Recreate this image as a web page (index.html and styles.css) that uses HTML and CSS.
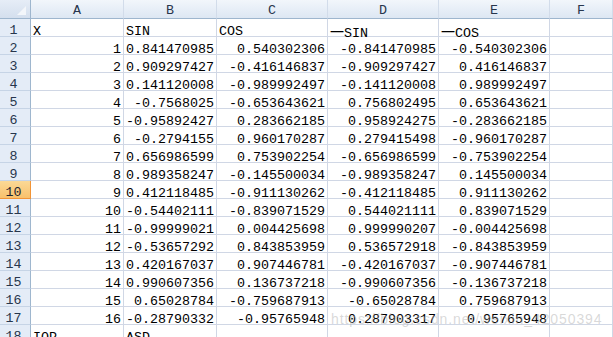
FILE: index.html
```html
<!DOCTYPE html>
<html>
<head>
<meta charset="utf-8">
<link rel="stylesheet" href="styles.css">
</head>
<body>
<div class="sheet">
  <div class="corner"></div>
  <div class="ch">A</div><div class="ch">B</div><div class="ch">C</div><div class="ch">D</div><div class="ch">E</div><div class="ch">F</div>

  <div class="rh">1</div><div class="cell">X</div><div class="cell">SIN</div><div class="cell">COS</div><div class="cell"><span class="fw">一</span>SIN</div><div class="cell"><span class="fw">一</span>COS</div><div class="cell"></div>
  <div class="rh">2</div><div class="cell num">1</div><div class="cell num">0.841470985</div><div class="cell num">0.540302306</div><div class="cell num">-0.841470985</div><div class="cell num">-0.540302306</div><div class="cell"></div>
  <div class="rh">3</div><div class="cell num">2</div><div class="cell num">0.909297427</div><div class="cell num">-0.416146837</div><div class="cell num">-0.909297427</div><div class="cell num">0.416146837</div><div class="cell"></div>
  <div class="rh">4</div><div class="cell num">3</div><div class="cell num">0.141120008</div><div class="cell num">-0.989992497</div><div class="cell num">-0.141120008</div><div class="cell num">0.989992497</div><div class="cell"></div>
  <div class="rh">5</div><div class="cell num">4</div><div class="cell num">-0.7568025</div><div class="cell num">-0.653643621</div><div class="cell num">0.756802495</div><div class="cell num">0.653643621</div><div class="cell"></div>
  <div class="rh">6</div><div class="cell num">5</div><div class="cell num">-0.95892427</div><div class="cell num">0.283662185</div><div class="cell num">0.958924275</div><div class="cell num">-0.283662185</div><div class="cell"></div>
  <div class="rh">7</div><div class="cell num">6</div><div class="cell num">-0.2794155</div><div class="cell num">0.960170287</div><div class="cell num">0.279415498</div><div class="cell num">-0.960170287</div><div class="cell"></div>
  <div class="rh">8</div><div class="cell num">7</div><div class="cell num">0.656986599</div><div class="cell num">0.753902254</div><div class="cell num">-0.656986599</div><div class="cell num">-0.753902254</div><div class="cell"></div>
  <div class="rh">9</div><div class="cell num">8</div><div class="cell num">0.989358247</div><div class="cell num">-0.145500034</div><div class="cell num">-0.989358247</div><div class="cell num">0.145500034</div><div class="cell"></div>
  <div class="rh sel">10</div><div class="cell num">9</div><div class="cell num">0.412118485</div><div class="cell num">-0.911130262</div><div class="cell num">-0.412118485</div><div class="cell num">0.911130262</div><div class="cell"></div>
  <div class="rh">11</div><div class="cell num">10</div><div class="cell num">-0.54402111</div><div class="cell num">-0.839071529</div><div class="cell num">0.544021111</div><div class="cell num">0.839071529</div><div class="cell"></div>
  <div class="rh">12</div><div class="cell num">11</div><div class="cell num">-0.99999021</div><div class="cell num">0.004425698</div><div class="cell num">0.999990207</div><div class="cell num">-0.004425698</div><div class="cell"></div>
  <div class="rh">13</div><div class="cell num">12</div><div class="cell num">-0.53657292</div><div class="cell num">0.843853959</div><div class="cell num">0.536572918</div><div class="cell num">-0.843853959</div><div class="cell"></div>
  <div class="rh">14</div><div class="cell num">13</div><div class="cell num">0.420167037</div><div class="cell num">0.907446781</div><div class="cell num">-0.420167037</div><div class="cell num">-0.907446781</div><div class="cell"></div>
  <div class="rh">15</div><div class="cell num">14</div><div class="cell num">0.990607356</div><div class="cell num">0.136737218</div><div class="cell num">-0.990607356</div><div class="cell num">-0.136737218</div><div class="cell"></div>
  <div class="rh">16</div><div class="cell num">15</div><div class="cell num">0.65028784</div><div class="cell num">-0.759687913</div><div class="cell num">-0.65028784</div><div class="cell num">0.759687913</div><div class="cell"></div>
  <div class="rh">17</div><div class="cell num">16</div><div class="cell num">-0.28790332</div><div class="cell num">-0.95765948</div><div class="cell num">0.287903317</div><div class="cell num">0.95765948</div><div class="cell"></div>
  <div class="rh">18</div><div class="cell">IOP</div><div class="cell">ASD</div><div class="cell"></div><div class="cell"></div><div class="cell"></div><div class="cell"></div>

  <div class="watermark">https://blog.csdn.net/weixin_42050394</div>
</div>
</body>
</html>
```

FILE: styles.css
```css
* {
  box-sizing: border-box;
  margin: 0;
  padding: 0;
}

html,
body {
  background: #ffffff;
  overflow: hidden;
}

body {
  font-family: "Liberation Mono", "DejaVu Sans Mono", monospace;
  font-size: 13.33px;
  color: #000000;
}

.sheet {
  position: relative;
  display: grid;
  width: 613px;
  grid-template-columns: 31px 93px 93px 111px 111px 111px 1fr;
  grid-template-rows: 19px;
  grid-auto-rows: 18px;
}

.corner {
  position: relative;
  background: linear-gradient(#e6edf7, #d4dfee);
  border-right: 1px solid #9eb6ce;
  border-bottom: 1px solid #9eb6ce;
}

.corner::after {
  content: "";
  position: absolute;
  right: 4px;
  bottom: 3px;
  width: 0;
  height: 0;
  border-left: 9px solid transparent;
  border-bottom: 9px solid #f3f6fa;
}

.ch {
  background: linear-gradient(#f2f6fb, #dde7f3);
  border-right: 1px solid #d2dcea;
  border-bottom: 1px solid #9eb6ce;
  text-align: center;
  padding-top: 2px;
  line-height: 17px;
  color: #27364d;
  white-space: nowrap;
}

.rh {
  background: #e4ecf7;
  border-right: 1px solid #9eb6ce;
  border-bottom: 1px solid #c6d4e6;
  text-align: center;
  padding-top: 3px;
  padding-right: 3px;
  line-height: 17px;
  color: #27364d;
  white-space: nowrap;
}

.rh.sel {
  background: linear-gradient(#fbd996, #f8c16c);
  border-right-color: #f29436;
  border-bottom-color: #f29436;
  color: #1e2530;
}

.cell {
  border-right: 1px solid #d0d7e5;
  border-bottom: 1px solid #d0d7e5;
  padding: 4px 2px 0 2px;
  line-height: 17px;
  white-space: nowrap;
}

.num {
  text-align: right;
}

.fw {
  font-family: "Noto Sans CJK SC", sans-serif;
  font-size: 14px;
}

.watermark {
  position: absolute;
  left: 331px;
  top: 311px;
  font-family: "Liberation Sans", Arial, sans-serif;
  font-size: 14px;
  letter-spacing: 0.9px;
  line-height: 16px;
  color: rgba(170, 170, 170, 0.45);
  white-space: nowrap;
}
```
